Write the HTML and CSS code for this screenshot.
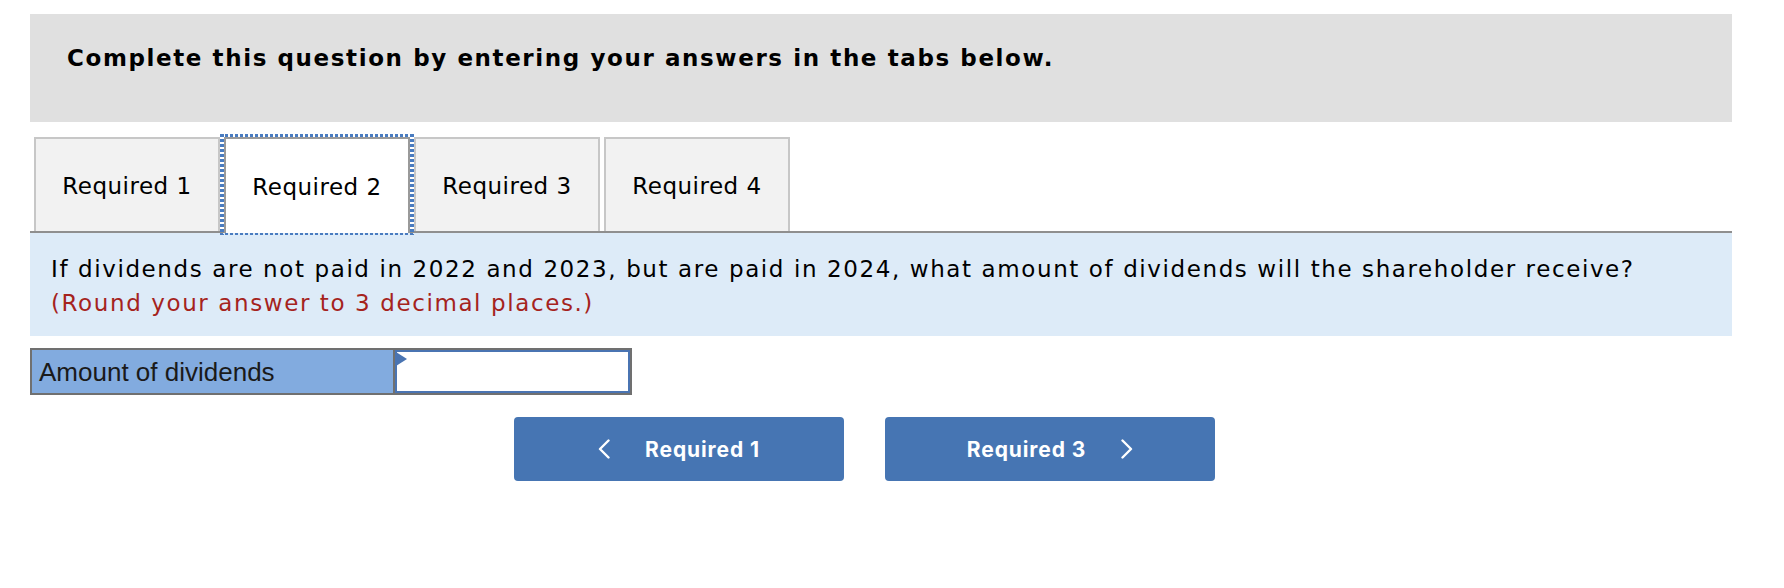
FILE: index.html
```html
<!DOCTYPE html>
<html lang="en">
<head>
<meta charset="utf-8">
<title>Required 2</title>
<link rel="stylesheet" href="styles.css">
</head>
<body>
<div class="wrap">
  <div class="header">
    <h1 class="title">Complete this question by entering your answers in the tabs below.</h1>
  </div>
  <div class="tabs">
    <div class="tab">Required 1</div>
    <div class="tab active">Required 2</div>
    <div class="tab">Required 3</div>
    <div class="tab">Required 4</div>
  </div>
  <div class="question">
    <p class="q-text">If dividends are not paid in 2022 and 2023, but are paid in 2024, what amount of dividends will the shareholder receive?</p>
    <p class="q-note">(Round your answer to 3 decimal places.)</p>
  </div>
  <div class="answer-row">
    <div class="answer-label">Amount of dividends</div>
    <div class="answer-cell">
      <div class="answer-input"></div>
      <span class="flag"></span>
    </div>
  </div>
  <div class="nav">
    <button class="nav-btn">
      <svg class="chev" width="12" height="20" viewBox="0 0 12 20"><polyline points="10.5,1.5 2,10 10.5,18.5" fill="none" stroke="#fff" stroke-width="2.4" stroke-linecap="round" stroke-linejoin="round"/></svg>
      <span>Required 1</span>
    </button>
    <button class="nav-btn">
      <span>Required 3</span>
      <svg class="chev" width="12" height="20" viewBox="0 0 12 20"><polyline points="1.5,1.5 10,10 1.5,18.5" fill="none" stroke="#fff" stroke-width="2.4" stroke-linecap="round" stroke-linejoin="round"/></svg>
    </button>
  </div>
</div>
</body>
</html>
```
FILE: styles.css
```css
html, body {
  margin: 0;
  padding: 0;
  background: #ffffff;
}

.wrap {
  padding: 14px 52px 0 30px;
  font-family: "DejaVu Sans", Verdana, sans-serif;
  color: #000;
}

.header {
  background: #e0e0e0;
  height: 108px;
  box-sizing: border-box;
  padding: 31px 0 0 37px;
}

.title {
  margin: 0;
  font-size: 23px;
  letter-spacing: 1.6px;
  line-height: 26px;
  font-weight: bold;
}

.tabs {
  display: flex;
  gap: 4px;
  padding-left: 4px;
  margin-top: 15px;
  position: relative;
  z-index: 1;
}

.tab {
  position: relative;
  width: 186px;
  height: 94px;
  box-sizing: border-box;
  border: 2px solid #c7c7c7;
  border-bottom: 0;
  background: #f2f2f2;
  font-size: 23px;
  letter-spacing: 0.5px;
  display: flex;
  align-items: center;
  justify-content: center;
  padding-top: 2px;
}

.tab.active {
  background: #ffffff;
  border-color: #9a9a9a;
  height: 96px;
  margin-bottom: -2px;
}

.tab.active::after {
  content: "";
  position: absolute;
  top: -5px;
  left: -6px;
  right: -6px;
  bottom: -2px;
  pointer-events: none;
  background:
    repeating-linear-gradient(90deg, #4a7cc0 0 3px, transparent 3px 5px) top / 100% 3px no-repeat,
    repeating-linear-gradient(90deg, #4a7cc0 0 3px, transparent 3px 5px) bottom / 100% 2px no-repeat,
    repeating-linear-gradient(180deg, #4a7cc0 0 3px, transparent 3px 5px) left / 4px 100% no-repeat,
    repeating-linear-gradient(180deg, #4a7cc0 0 3px, transparent 3px 5px) right / 4px 100% no-repeat;
}

.question {
  background: #ddebf8;
  border-top: 2px solid #8f8f8f;
  height: 105px;
  box-sizing: border-box;
  padding: 19px 0 0 21px;
}

.q-text, .q-note {
  margin: 0;
  font-size: 23px;
  letter-spacing: 1.6px;
  line-height: 34px;
}

.q-note {
  color: #a5231d;
}

.answer-row {
  display: flex;
  margin-top: 12px;
  height: 47px;
}

.answer-label {
  width: 363px;
  box-sizing: border-box;
  background: #82abdf;
  border: 2px solid #707070;
  border-right: 0;
  font-family: "Liberation Sans", Arial, sans-serif;
  font-size: 26px;
  color: #1a1a1a;
  display: flex;
  align-items: center;
  padding: 2px 0 0 7px;
}

.answer-cell {
  position: relative;
  width: 239px;
  box-sizing: border-box;
  border: 2px solid #707070;
}

.answer-input {
  height: 100%;
  box-sizing: border-box;
  border: 2px solid #4a74b2;
  background: #fff;
}

.flag {
  position: absolute;
  top: 2px;
  left: 1px;
  width: 0;
  height: 0;
  border-top: 7px solid transparent;
  border-bottom: 7px solid transparent;
  border-left: 11px solid #4a74b2;
}

.nav {
  display: flex;
  gap: 41px;
  margin-top: 22px;
  padding-left: 484px;
}

.nav-btn {
  width: 330px;
  height: 64px;
  border: 0;
  border-radius: 4px;
  background: #4675b3;
  color: #fff;
  font-family: Inter, Roboto, "Liberation Sans", sans-serif;
  font-weight: bold;
  font-size: 21px;
  letter-spacing: 0.9px;
  display: flex;
  align-items: center;
  justify-content: center;
  gap: 35px;
  padding: 0;
}

.chev {
  display: block;
  flex: none;
}
```
